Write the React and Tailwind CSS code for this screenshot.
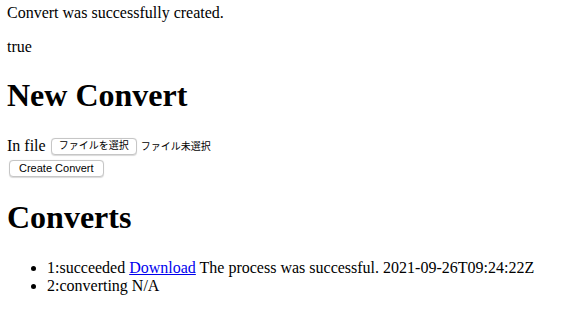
export default function App() {
  const btn =
    "h-[17px] rounded-[4px] border border-[#c6c6c6] bg-white shadow-[0_0.5px_1px_rgba(0,0,0,0.15)] font-['Liberation_Sans','Noto_Sans_CJK_JP',sans-serif] text-black leading-none flex items-center";

  return (
    <div className="min-h-screen bg-white pl-[7px] pr-2 pt-1 text-black font-['Liberation_Serif',serif] text-base">
      <p className="leading-[18px]">Convert was successfully created.</p>
      <p className="mt-4 leading-[18px]">true</p>

      <h1 className="mt-[21px] text-[32px] font-bold leading-[37px]">New Convert</h1>

      <form className="mt-[21px]">
        <div className="flex h-[22px] items-center">
          <label className="leading-[18px]">In file</label>
          <button type="button" className={`${btn} ml-[5px] px-[7px] text-[10px]`}>
            ファイルを選択
          </button>
          <span className="ml-[4px] font-['Noto_Sans_CJK_JP',sans-serif] text-[10px] leading-none">
            ファイル未選択
          </span>
        </div>
        <div className="pt-[3px]">
          <button type="button" className={`${btn} ml-[2px] px-[9px] text-[11px]`}>
            Create Convert
          </button>
        </div>
      </form>

      <h1 className="mt-[22px] text-[32px] font-bold leading-[37px]">Converts</h1>

      <ul className="mt-[23px] list-disc pl-10">
        <li className="leading-[18px]">
          1:succeeded{" "}
          <a href="#" className="text-[#0000ee] underline">
            Download
          </a>{" "}
          The process was successful. 2021-09-26T09:24:22Z
        </li>
        <li className="leading-[18px]">2:converting N/A</li>
      </ul>
    </div>
  );
}
